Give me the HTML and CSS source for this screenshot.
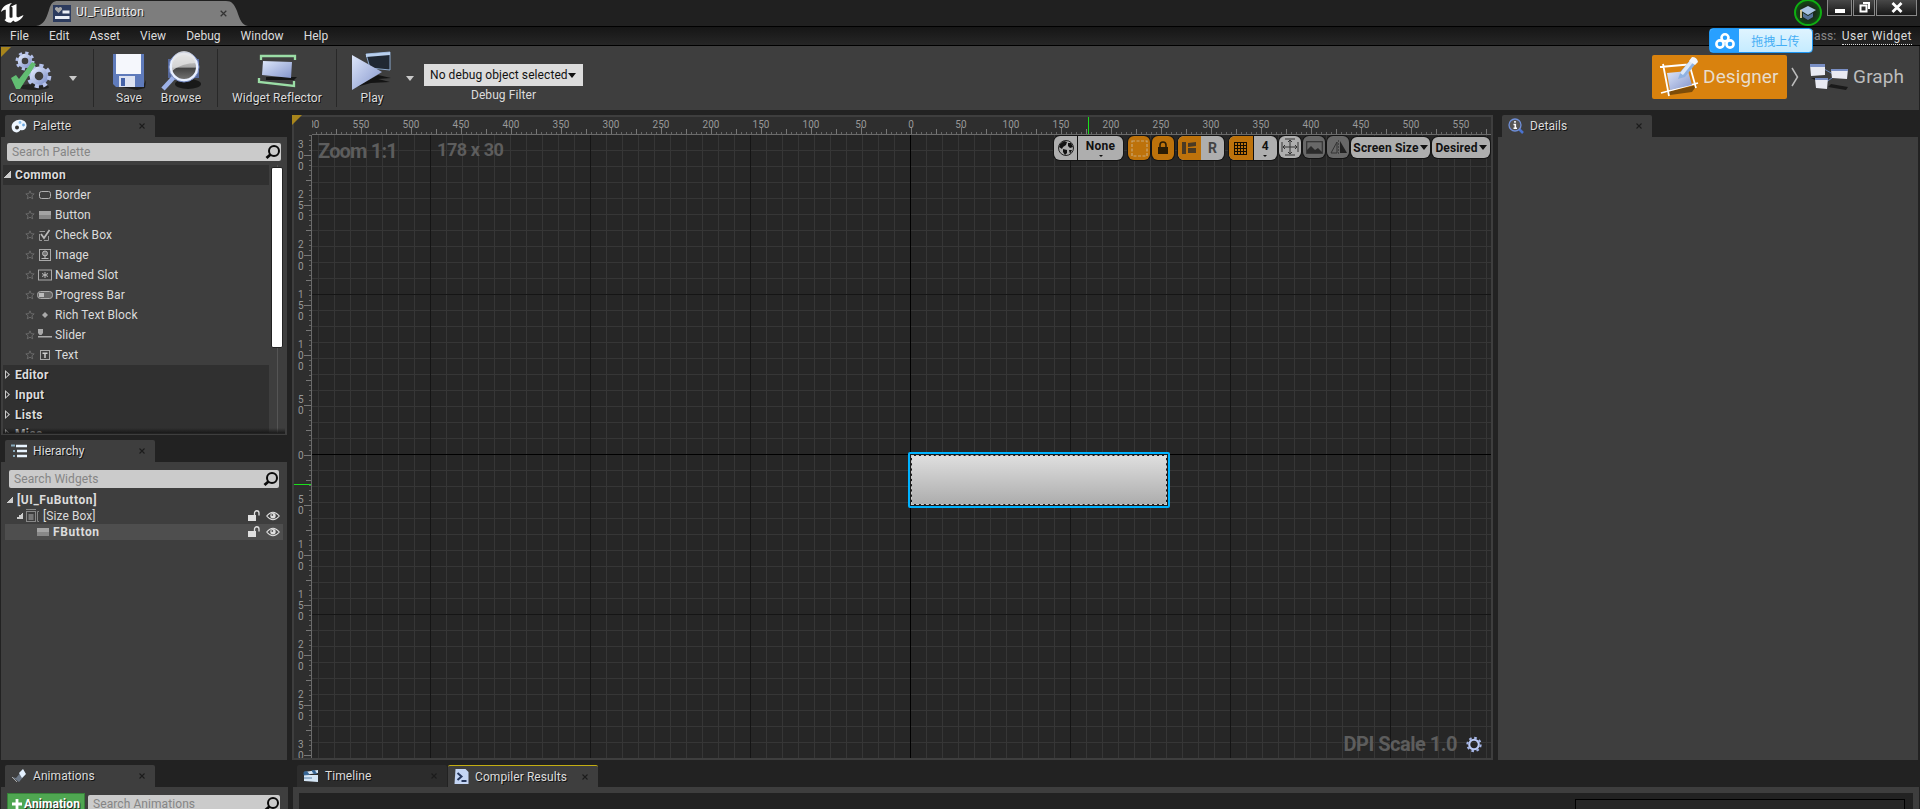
FILE: index.html
```
<!DOCTYPE html>
<html lang="en">
<head>
    <meta charset="UTF-8">
    <meta name="viewport" content="width=device-width, initial-scale=1.0">
    <title>UI_FuButton</title>
    <link rel="stylesheet" href="styles.css">
</head>
<body>
    <!-- Shared icons -->
    <svg class="defs" width="0" height="0">
        <defs>
            <linearGradient id="steel" x1="0" y1="0" x2="1" y2="1">
                <stop offset="0" stop-color="#dde6fa"/>
                <stop offset="1" stop-color="#8495cc"/>
            </linearGradient>
            <linearGradient id="dark" x1="0" y1="0" x2="0" y2="1">
                <stop offset="0" stop-color="#e8e8e8"/>
                <stop offset=".5" stop-color="#a5a5a5"/>
                <stop offset=".55" stop-color="#444"/>
                <stop offset="1" stop-color="#777"/>
            </linearGradient>
        </defs>
        <symbol id="close" viewBox="0 0 8 8"><path d="M1.5 1.5l5 5M6.500 1.500l-5 5" stroke="currentColor" stroke-width="1.100"/></symbol>
        <symbol id="search" viewBox="0 0 16 16"><circle cx="9" cy="7" r="5" fill="none" stroke="#0a0a0a" stroke-width="2"/><path d="M5.500 10.500L1.500 14" stroke="#0a0a0a" stroke-width="2.800"/></symbol>
        <symbol id="star" viewBox="0 0 10 10"><path d="M5 .8l1.200 2.900 3 .2-2.300 1.900.8 3L5 7.200 2.300 8.800l.8-3L.8 3.900l3-.2z" fill="none" stroke="#6e6e6e" stroke-width=".9"/></symbol>
        <symbol id="button" viewBox="0 0 12 8"><path d="M0 0h12v8H0z" fill="#888"/><path d="M0 0h12v4H0z" fill="#a4a4a4"/></symbol>
        <symbol id="unlock" viewBox="0 0 12 11"><path d="M0 5h8v6H0z" fill="#e0e0e0"/><path d="M6.500 5V3a2.200 2.200 0 0 1 4.500 0v2.500" fill="none" stroke="#e0e0e0" stroke-width="1.300"/></symbol>
        <symbol id="eye" viewBox="0 0 14 10"><path d="M.7 5Q7-2.500 13.300 5 7 12.500.7 5z" fill="none" stroke="#e0e0e0" stroke-width="1.100"/><circle cx="7" cy="4.800" r="2.700" fill="#e0e0e0"/><circle cx="6.300" cy="4" r=".9" fill="#555"/></symbol>
        <symbol id="gear" viewBox="-10 -10 20 20"><circle r="5.300" fill="none" stroke="url(#steel)" stroke-width="4"/><circle r="8" fill="none" stroke="#b4c1ea" stroke-width="3" stroke-dasharray="3.140 3.140"/></symbol>
    </svg>

    <header class="titlebar">
        <svg class="logo" width="23" height="20" viewBox="0 0 23 20"><path d="M0 9C1 4 5 1 11 0 9 1.500 8.500 3 8.500 5v8.500c0 1.500 1.500 1.700 3 .7V4.500L10 3.500 15.500 1v12.500l1.500 1L22.500 12C21 16 17.500 18.500 14 19l-1.700-1.500-2.500 2.200C6.500 19.700 4 18 3.500 17l1.300-1V6.800C3 6.300 1.500 7.500 0 9z" fill="#fff"/></svg>
        <div class="doc-tab">
            <svg class="doc-shape" width="212" height="25" viewBox="0 0 212 25"><path d="M0 25C8 24 10 18 13 9 15 2 17 0 22 0H190c6 0 8 3 11 10 3 9 5 14 11 15z" fill="#7d7d7d"/></svg>
            <svg class="doc-icon" width="18" height="17" viewBox="0 0 18 17"><path d="M0 0h18v17H0z" fill="#2c3b5e"/><path d="M5.500 8L2 4.500C1.500 2 4 1 5.500 3 7 1 9.500 2 9 4.500z" fill="#aaa"/><path d="M9.500 5.500h7v3h-7zM2 11h14.500v3H2z" fill="#e9edf5"/></svg>
            <span class="doc-name">UI_FuButton</span>
            <svg class="doc-close" width="9" height="9"><use href="#close"/></svg>
        </div>
        <div class="window-buttons">
            <span class="win win-min"><svg width="10" height="10"><path d="M0 6h10v4H0z" fill="#fff"/></svg></span>
            <span class="win win-max"><svg width="11" height="11" viewBox="0 0 11 11"><path d="M4 1h6v6M1.500 3.500h6v6h-6z" fill="none" stroke="#fff" stroke-width="2"/></svg></span>
            <span class="win win-close"><svg width="12" height="11" viewBox="0 0 12 11"><path d="M1.500 1l9 9M10.500 1l-9 9" stroke="#fff" stroke-width="2.800"/></svg></span>
        </div>
    </header>

    <nav class="menubar">
        <ul>
            <li>File</li>
            <li>Edit</li>
            <li>Asset</li>
            <li>View</li>
            <li>Debug</li>
            <li>Window</li>
            <li>Help</li>
        </ul>
        <div class="parent-class"><span>Parent class:</span> <a>User Widget</a></div>
    </nav>

    <section class="toolbar">
        <i class="corner"></i>
        <div class="tool tool-compile">
            <svg width="42" height="40" viewBox="0 0 42 40">
                <ellipse cx="24" cy="36" rx="15" ry="3" fill="#222"/>
                <use href="#gear" x="5" y="0" width="20" height="20"/>
                <use href="#gear" x="16" y="12" width="26" height="26"/>
                <path d="M1 27l5-3 3 4L22 11l4 2L10 38H6z" fill="#62bd72"/>
            </svg>
            <span>Compile</span>
        </div>
        <i class="arrow"></i>
        <i class="sep"></i>
        <div class="tool tool-save">
            <svg width="36" height="40" viewBox="0 0 36 40">
                <path d="M5 35h27l3-6-1 8-8 2z" fill="#1d1d1d"/>
                <path d="M2 3h31v33H5l-3-3z" fill="#5f7bbb"/>
                <path d="M5 3h25v20H5z" fill="#f5f7fc"/>
                <path d="M8 25h16v11H8z" fill="#dde3f2"/>
                <path d="M10 27h4v8h-4z" fill="#4663a8"/>
            </svg>
            <span>Save</span>
        </div>
        <div class="tool tool-browse">
            <svg width="42" height="40" viewBox="0 0 42 40">
                <ellipse cx="28" cy="33" rx="13" ry="5" fill="#191919"/>
                <path d="M8 8h31v19H8z" fill="#56689a"/>
                <path d="M14 26L3 38" stroke="#9db1e6" stroke-width="4.500"/>
                <circle cx="24" cy="16" r="13.500" fill="url(#dark)" stroke="#e9f0ff" stroke-width="3"/>
                <circle cx="24" cy="16" r="15" fill="none" stroke="#7187c0" stroke-width="1"/>
                <path d="M12 20Q22 12 36 12A12 12 0 0 0 12 12z" fill="#e4e4e4" opacity=".75"/>
            </svg>
            <span>Browse</span>
        </div>
        <i class="sep"></i>
        <div class="tool tool-reflector">
            <svg width="40" height="40" viewBox="0 0 40 40">
                <path d="M9 26h31l-3 3H9z" fill="#151515"/>
                <path d="M6 10l29 1-1 16-29-3z" fill="url(#steel)"/>
                <path d="M4 9V5h34v4M2 27v4l35 4v-5" fill="none" stroke="#9bdda6" stroke-width="2.300"/>
            </svg>
            <span>Widget Reflector</span>
        </div>
        <i class="sep"></i>
        <div class="tool tool-play">
            <svg width="42" height="40" viewBox="0 0 42 40">
                <path d="M5 36l22-12 13 3-13 1 12 3-19 1z" fill="#141414"/>
                <path d="M15 3l24-2v18l-20-2z" fill="#202833" stroke="#8aa7cc"/>
                <path d="M15 3l24-2v3L15 6z" fill="#b9d0ee"/>
                <path d="M1 4l30 17L1 39z" fill="url(#steel)"/>
            </svg>
            <span>Play</span>
        </div>
        <i class="arrow"></i>
        <div class="debug-filter">
            <div class="combo">No debug object selected<i class="caret"></i></div>
            <span>Debug Filter</span>
        </div>
        <div class="modes">
            <div class="mode mode-active">
                <svg width="42" height="40" viewBox="0 0 42 40">
                    <path d="M8 35l31-7-5 7-22 3z" fill="#7d4c08"/>
                    <path d="M2 10l34-3M5 7l6 32M3 36l37-10M31 6l7 25" stroke="#fff" stroke-width="1.800"/>
                    <path d="M9 16l21-2 4 14-22 5z" fill="url(#steel)"/>
                    <path d="M20 22l3-8L34 1l5 4-12 15z" fill="#8fb2e2"/>
                    <path d="M22 16L34 1l3 2-12 15z" fill="#dbe7f8"/>
                    <path d="M31 4l3-4q5 0 6 5l-3 3z" fill="#f2f5fb"/>
                </svg>
                <span>Designer</span>
            </div>
            <svg class="chevron" width="9" height="20" viewBox="0 0 9 20"><path d="M1 1l5.500 9L1 19" fill="none" stroke="#bbb" stroke-width="1.500"/></svg>
            <div class="mode">
                <svg width="40" height="28" viewBox="0 0 40 28">
                    <path d="M22 21l17 3-2 3-18-3zM2 15h8v4z" fill="#1a1a1a"/>
                    <path d="M15 6l9 5M17 19l6-4" stroke="#6682b5"/>
                    <path d="M1 2l15-1v11l-14 1zM22 7l17-1-1 10-15-1zM6 16l13-1-1 11-11-1z" fill="#e9eaf2"/>
                    <path d="M1 1h15v3H1zM22 6h17v2H22zM6 15h13v2H6z" fill="#7a8fc4"/>
                </svg>
                <span>Graph</span>
            </div>
        </div>
    </section>

    <main class="workspace">
        <div class="side">
            <section class="dock palette">
                <div class="tabs"><div class="tab">
                    <svg width="16" height="14" viewBox="0 0 16 14"><path d="M2 12C-1 8 1 2 7 1c5-1 9 2 8.500 6-.5 4-4 5-6 4-2 3-5 3-7.500 1z" fill="#eef6ff"/><circle cx="6" cy="8.500" r="2" fill="#333"/><circle cx="9" cy="3.500" r="1.400" fill="#8dc2ef"/><circle cx="12.500" cy="6" r="1.400" fill="#6ca7e0"/></svg>
                    <span>Palette</span><svg class="x" width="8" height="8"><use href="#close"/></svg>
                </div></div>
                <div class="panel">
                    <div class="search">Search Palette<svg width="16" height="16"><use href="#search"/></svg></div>
                    <div class="palette-body">
                        <ul class="tree">
                            <li class="group"><i class="open"></i>Common</li>
                            <li><svg class="star"><use href="#star"/></svg><svg class="wi" viewBox="0 0 16 12"><rect x="2.500" y="2.500" width="11" height="7" rx="2" fill="none" stroke="#b0b0b0"/></svg>Border</li>
                            <li><svg class="star"><use href="#star"/></svg><svg class="wi" viewBox="0 0 16 12"><use href="#button" x="2" y="2" width="12" height="8"/></svg>Button</li>
                            <li><svg class="star"><use href="#star"/></svg><svg class="wi" viewBox="0 0 16 12"><path d="M8 2.500H2.500M2.500 5v6.500H5M7 11.500h4.500V7" fill="none" stroke="#999"/><path d="M4 5l3 4 5.500-8" fill="none" stroke="#bbb" stroke-width="1.700"/></svg>Check Box</li>
                            <li><svg class="star"><use href="#star"/></svg><svg class="wi" viewBox="0 0 16 12"><rect x="2.500" y=".5" width="11" height="11" fill="none" stroke="#aaa"/><circle cx="8" cy="4.500" r="2.500" fill="#777" stroke="#bbb"/><path d="M8 6v4M4.500 9.500h7" stroke="#bbb"/></svg>Image</li>
                            <li><svg class="star"><use href="#star"/></svg><svg class="wi" viewBox="0 0 16 12"><rect x="1.500" y="1" width="13" height="10" fill="none" stroke="#aaa"/><path d="M8 3v6M5 4.500l6 3M11 4.500l-6 3" stroke="#bbb"/></svg>Named Slot</li>
                            <li><svg class="star"><use href="#star"/></svg><svg class="wi" viewBox="0 0 16 12"><rect x=".5" y="2.500" width="15" height="7" rx="3" fill="#666" stroke="#aaa"/><path d="M2 4h5v4H2z" fill="#bbb"/></svg>Progress Bar</li>
                            <li><svg class="star"><use href="#star"/></svg><svg class="wi" viewBox="0 0 16 12"><path d="M8 3l3 3-3 3-3-3z" fill="#aaa"/></svg>Rich Text Block</li>
                            <li><svg class="star"><use href="#star"/></svg><svg class="wi" viewBox="0 0 16 12"><path d="M1 0h5v4L4.500 6h-2L1 4zM1 7h14v1.500H1z" fill="#aaa"/></svg>Slider</li>
                            <li><svg class="star"><use href="#star"/></svg><svg class="wi" viewBox="0 0 16 12"><rect x="3.500" y="1.500" width="9" height="9" fill="none" stroke="#aaa"/><path d="M5.500 4.200h5M8 4v5" stroke="#ccc" stroke-width="1.500"/></svg>Text</li>
                            <li class="group"><i class="shut"></i>Editor</li>
                            <li class="group"><i class="shut"></i>Input</li>
                            <li class="group"><i class="shut"></i>Lists</li>
                            <li class="group last"><i class="shut"></i>Misc</li>
                        </ul>
                        <div class="scroll"><i></i></div>
                    </div>
                </div>
            </section>
            <section class="dock hierarchy">
                <div class="tabs"><div class="tab">
                    <svg width="16" height="14" viewBox="0 0 16 14"><path d="M0 1.500h4M2 7h2M2 12h2" stroke="#8ab" stroke-width="2"/><path d="M5 2h11M6 7h10M6 12h10" stroke="#e8f4ff" stroke-width="2.500"/></svg>
                    <span>Hierarchy</span><svg class="x" width="8" height="8"><use href="#close"/></svg>
                </div></div>
                <div class="panel">
                    <div class="search">Search Widgets<svg width="16" height="16"><use href="#search"/></svg></div>
                    <ul class="outline">
                        <li class="root"><i class="open"></i>[UI_FuButton]</li>
                        <li class="child"><i class="open"></i><svg width="14" height="14" viewBox="0 0 14 14"><rect x=".5" y="2.500" width="9" height="10" fill="none" stroke="#888"/><rect x="2.500" y="5" width="5" height="6" fill="#777"/><path d="M0 .5h10M13 2.500h-1.500v10H13" fill="none" stroke="#888"/></svg><span>[Size Box]</span><svg class="lock" width="12" height="11"><use href="#unlock"/></svg><svg width="14" height="10"><use href="#eye"/></svg></li>
                        <li class="leaf"><svg width="12" height="8"><use href="#button"/></svg><span>FButton</span><svg class="lock" width="12" height="11"><use href="#unlock"/></svg><svg width="14" height="10"><use href="#eye"/></svg></li>
                    </ul>
                </div>
            </section>
        </div>

        <section class="canvas">
            <i class="corner"></i>
            <div class="ruler-top">
                <div class="marks"><span>600</span><span>550</span><span>500</span><span>450</span><span>400</span><span>350</span><span>300</span><span>250</span><span>200</span><span>150</span><span>100</span><span>50</span><span>0</span><span>50</span><span>100</span><span>150</span><span>200</span><span>250</span><span>300</span><span>350</span><span>400</span><span>450</span><span>500</span><span>550</span></div>
                <i class="cursor-x"></i>
            </div>
            <div class="canvas-row">
                <div class="ruler-left">
                    <div class="marks"><span>300</span><span>250</span><span>200</span><span>150</span><span>100</span><span>50</span><span>0</span><span>50</span><span>100</span><span>150</span><span>200</span><span>250</span><span>300</span></div>
                    <i class="cursor-y"></i>
                </div>
                <div class="viewport">
                    <div class="hud">
                        <span class="zoom">Zoom 1:1</span>
                        <span class="size">178 x 30</span>
                        <div class="hud-buttons">
                            <div class="pill loc">
                                <span><svg width="16" height="16" viewBox="0 0 16 16"><circle cx="8" cy="8" r="7.500" fill="#aaa" stroke="#222"/><path d="M2 4l4-3 3 1-1 3-3 2-1 2-3-2zM10 3l3 0 2 4-3 1-2-2zM5 9l4 1v3l-2 2-2-3zM11 10l3 0-2 4z" fill="#111"/></svg></span>
                                <span class="drop">None<i></i></span>
                            </div>
                            <div class="pill on dash"><svg width="17" height="17" viewBox="0 0 17 17"><rect x="1" y="1" width="15" height="15" fill="none" stroke="#c9a877" stroke-width="1.200" stroke-dasharray="3 1.500"/></svg></div>
                            <div class="pill on"><svg width="12" height="14" viewBox="0 0 12 14"><path d="M1 6h10v7H1z" fill="#2a1c05"/><path d="M3 7V4a3 3 0 0 1 6 0v3" fill="none" stroke="#2a1c05" stroke-width="1.600"/></svg></div>
                            <div class="pill flow">
                                <span class="on"><svg width="15" height="14" viewBox="0 0 15 14"><path d="M0 1h4v12H0zM6 2l8-1v4l-8 1zM6 7h8v5H6z" fill="#4a3a24"/></svg></span>
                                <span class="r">R</span>
                            </div>
                            <div class="pill snap">
                                <span class="on"><svg width="13" height="13" viewBox="0 0 13 13" shape-rendering="crispEdges"><path d="M.5 0v13M3.500 0v13M6.500 0v13M9.500 0v13M12.500 0v13M0 .5h13M0 3.500h13M0 6.500h13M0 9.500h13M0 12.500h13" stroke="#140c00"/></svg></span>
                                <span class="drop">4<i></i></span>
                            </div>
                            <div class="pill sq"><svg width="18" height="18" viewBox="0 0 18 18"><path d="M1 4v10M17 4v10M4 1h10M4 17h10M9 2v14M2 9h14M7 4l2-2 2 2M7 14l2 2 2-2M4 7L2 9l2 2M14 7l2 2-2 2" fill="none" stroke="#333"/></svg></div>
                            <div class="pill sq off"><svg width="17" height="13" viewBox="0 0 17 13"><rect x=".7" y=".7" width="15.600" height="11.600" fill="none" stroke="#333" stroke-width="1.200"/><path d="M1 12V9l4-4 4 4 3-2 4 4v1z" fill="#2b2b2b"/></svg></div>
                            <div class="pill sq off"><svg width="17" height="14" viewBox="0 0 17 14"><path d="M7 2v11H1z" fill="none" stroke="#333"/><path d="M10 1v12h7z" fill="#222"/><path d="M8.500 0v14" stroke="#444" stroke-dasharray="2 1"/></svg></div>
                            <div class="pill text screen">Screen Size<i class="caret"></i></div>
                            <div class="pill text desired">Desired<i class="caret"></i></div>
                        </div>
                    </div>
                    <div class="selected"><div class="fbutton"></div></div>
                    <div class="dpi"><span>DPI Scale 1.0</span><svg width="16" height="17" viewBox="-10 -10 20 20"><circle r="6" fill="none" stroke="#b9c8f3" stroke-width="2.600"/><circle r="8.300" fill="none" stroke="#a5b5e6" stroke-width="2.600" stroke-dasharray="3.260 3.260"/></svg></div>
                </div>
            </div>
        </section>

        <section class="dock details">
            <div class="tabs"><div class="tab">
                <svg width="16" height="16" viewBox="0 0 16 16"><path d="M11 11l4 4" stroke="#4a72cf" stroke-width="2.500"/><circle cx="7" cy="7" r="6" fill="#555" stroke="#6f8fd8" stroke-width="1.300"/><path d="M7 3v1.800M5.500 6.500H7.300V10M5.500 10.300h3.500" fill="none" stroke="#fff" stroke-width="1.600"/></svg>
                <span>Details</span><svg class="x" width="8" height="8"><use href="#close"/></svg>
            </div></div>
            <div class="panel"></div>
        </section>
    </main>

    <footer class="bottom">
        <section class="dock animations">
            <div class="tabs"><div class="tab">
                <svg width="16" height="14" viewBox="0 0 16 14"><path d="M1 8l4 1 5-6 4 3-6 7z" fill="#6d7886"/><path d="M8 4l4-4 3 5-4 4z" fill="#e4f1ff"/><path d="M1 8l5 5" stroke="#aaa"/></svg>
                <span>Animations</span><svg class="x" width="8" height="8"><use href="#close"/></svg>
            </div></div>
            <div class="panel">
                <div class="add"><svg width="10" height="10" viewBox="0 0 10 10"><path d="M5 0v10M0 5h10" stroke="#fff" stroke-width="2.800"/></svg>Animation</div>
                <div class="search">Search Animations<svg width="16" height="16"><use href="#search"/></svg></div>
            </div>
        </section>
        <section class="dock results">
            <div class="tabs">
                <div class="tab idle">
                    <svg width="16" height="14" viewBox="0 0 16 14"><path d="M1 3l14-2v3L1 6zM1 6h14v7l-14-1z" fill="#d5e6f6"/><path d="M1 3l3-.5 2 3-5 .5zM9 1.800l2.500-.3 2 3-2.500.3zM1 9h8" fill="#356595" stroke="#356595" stroke-width=".8"/></svg>
                    <span>Timeline</span><svg class="x" width="8" height="8"><use href="#close"/></svg>
                </div>
                <div class="tab current">
                    <svg width="15" height="15" viewBox="0 0 14 15"><path d="M1 0h10l3 3v12H0z" fill="#c5d6f5"/><path d="M3 4l4 3.500L3 11M7 12h5" fill="none" stroke="#26375c" stroke-width="2"/></svg>
                    <span>Compiler Results</span><svg class="x" width="8" height="8"><use href="#close"/></svg>
                </div>
            </div>
            <div class="panel"><div class="log"><div class="log-box"></div></div></div>
        </section>
    </footer>

    <div class="tutorial"><svg width="18" height="16" viewBox="0 0 18 16"><path d="M1 5l8-4 8 4-8 5z" fill="#a9c3e2"/><path d="M4 8l5 3 5-3v4l-5 3-5-3z" fill="#557299"/><path d="M2 5v8" stroke="#e0cf9c" stroke-width="1.800"/></svg></div>
    <div class="upload">
        <span class="upload-logo"><svg width="20" height="16" viewBox="0 0 20 16"><g fill="none" stroke="#fff" stroke-width="2.600"><circle cx="10" cy="4.800" r="3.500"/><circle cx="5" cy="11" r="3.600"/><circle cx="15" cy="11" r="3.600"/></g></svg></span>
        <span class="upload-text">拖拽上传</span>
    </div>
</body>
</html>
```

FILE: styles.css
```
* {
    box-sizing: border-box;
}

body {
    margin: 0;
    width: 1920px;
    height: 809px;
    overflow: hidden;
    position: relative;
    display: flex;
    flex-direction: column;
    background-color: #222;
    color: #dcdcdc;
    font-family: Roboto, "Liberation Sans", sans-serif;
    font-size: 12px;
    line-height: 16px;
    letter-spacing: 0.08px;
}

ul {
    list-style: none;
    margin: 0;
    padding: 0;
}

svg {
    display: block;
    flex-shrink: 0;
}

.defs {
    position: absolute;
}

/* Title bar */
.titlebar {
    height: 26px;
    flex-shrink: 0;
    display: flex;
    align-items: flex-start;
    background-color: #202020;
}

.logo {
    margin: 3px 12px 0 1px;
}

.doc-tab {
    width: 212px;
    height: 25px;
    margin-top: 1px;
    display: grid;
    grid-template-columns: 17px 18px 5px 1fr 9px 20px;
    align-items: center;
}

.doc-shape {
    grid-area: 1 / 1 / 2 / 7;
}

.doc-icon {
    grid-area: 1 / 2;
}

.doc-name {
    grid-area: 1 / 4;
    color: #eee;
    letter-spacing: 0.3px;
    text-shadow: 1px 1px #222;
    margin-top: -3px;
}

.doc-close {
    grid-area: 1 / 5;
    color: #333;
    margin-top: -1px;
}

.window-buttons {
    display: flex;
    gap: 1px;
    margin-left: auto;
    margin-right: 3px;
}

.win {
    height: 16px;
    display: flex;
    align-items: center;
    justify-content: center;
    border: 1px solid #888;
    border-top: none;
    background: linear-gradient(#484848, #181818);
}

.win-min {
    width: 25px;
}

.win-max {
    width: 22px;
}

.win-close {
    width: 41px;
}

/* Menu */
.menubar {
    height: 20px;
    flex-shrink: 0;
    display: flex;
    justify-content: space-between;
    padding: 0 8px 0 10px;
    border-top: 1px solid #000;
    border-bottom: 1px solid #000;
    background: linear-gradient(#161616, #262626);
}

.menubar ul {
    display: flex;
    gap: 20px;
    padding-top: 1px;
    letter-spacing: 0.03px;
}

.parent-class {
    padding-top: 1px;
    letter-spacing: 0.5px;
}

.parent-class span {
    color: #888;
    margin-right: 2px;
    letter-spacing: 0.1px;
}

.parent-class a {
    display: inline-block;
    line-height: 15px;
    border-bottom: 1px dotted #ddd;
}

/* Toolbar */
.toolbar {
    height: 64px;
    flex-shrink: 0;
    display: flex;
    position: relative;
    margin: 0 1px;
    background-color: #3e3e3e;
}

.corner {
    position: absolute;
    left: 0;
    top: 1px;
    border-top: 10px solid #a8851c;
    border-right: 10px solid transparent;
}

.tool {
    display: flex;
    flex-direction: column;
    align-items: center;
    padding-top: 5px;
    text-shadow: 1px 1px #111;
}

.tool span {
    margin-top: -1px;
    white-space: nowrap;
}

.tool-compile {
    margin-left: 7px;
    width: 46px;
}

.tool-save {
    margin-left: 19px;
    width: 32px;
}

.tool-browse {
    margin-left: 11px;
    width: 50px;
}

.tool-reflector {
    margin-left: 13px;
    width: 92px;
}

.tool-play {
    margin-left: 14px;
    width: 42px;
}

.arrow {
    align-self: flex-start;
    margin: 30px 0 0 15px;
    border: 4.5px solid transparent;
    border-top: 5px solid #c9c9c9;
    border-bottom: none;
}

.sep {
    width: 1px;
    margin: 3px 0 3px 16px;
    background-color: #282828;
}

.arrow + .sep {
    margin-left: 16px;
}

.tool-browse + .sep {
    margin-left: 11px;
}

.tool-reflector + .sep {
    margin-left: 13px;
}

.tool-play + .arrow {
    margin-left: 13px;
}

.debug-filter {
    display: flex;
    flex-direction: column;
    align-items: center;
    margin: 18px 0 0 10px;
}

.debug-filter > span {
    margin-top: 1px;
}

.combo {
    width: 159px;
    height: 22px;
    display: flex;
    align-items: center;
    justify-content: space-between;
    padding: 0 7px 0 6px;
    background-color: #dcdcdc;
    color: #111;
}

.caret {
    border: 4px solid transparent;
    border-top: 5px solid #111;
    border-bottom: none;
}

.modes {
    display: flex;
    align-items: center;
    height: 44px;
    margin: 9px 15px 0 auto;
    font-size: 19px;
    color: #bcbcbc;
}

.mode {
    display: flex;
    align-items: center;
    gap: 4px;
    height: 44px;
}

.mode-active {
    width: 135px;
    padding-left: 6px;
    gap: 3px;
    border-radius: 2px;
    background-color: #d9820e;
    color: #e8dccb;
}

.chevron {
    margin: 0 9px 0 4px;
}

/* Docks */
.workspace {
    height: 650px;
    flex-shrink: 0;
    padding: 5px 1px 0;
    display: flex;
}

.side {
    width: 286px;
    display: flex;
    flex-direction: column;
    gap: 5px;
}

.dock {
    display: flex;
    flex-direction: column;
    min-height: 0;
}

.palette {
    height: 320px;
}

.hierarchy {
    flex: 1;
}

.tabs {
    display: flex;
    gap: 2px;
    padding-left: 4px;
}

.tab {
    width: 150px;
    height: 22px;
    flex-shrink: 0;
    display: flex;
    align-items: center;
    gap: 6px;
    padding: 0 9px 0 6px;
    background-color: #3e3e3e;
    border-radius: 2px 2px 0 0;
    text-shadow: 1px 1px #111;
}

.tab .x {
    margin-left: auto;
    color: #1c1c1c;
}

.panel {
    flex: 1;
    min-height: 0;
    background-color: #3e3e3e;
}

.search {
    height: 18px;
    display: flex;
    align-items: center;
    justify-content: space-between;
    padding: 0 0 0 5px;
    border-radius: 2px;
    background-color: #cbcbcb;
    color: #858585;
}

.palette .search {
    margin: 6px 6px 4px;
}

.palette-body {
    height: 269px;
    display: flex;
    margin: 0 2px;
    overflow: hidden;
    position: relative;
    border-bottom: 1px solid #222;
}

.palette-body::after {
    content: "";
    position: absolute;
    left: 0;
    right: 0;
    bottom: 0;
    height: 5px;
    background: linear-gradient(transparent, rgba(20, 20, 20, 0.8));
}

.tree {
    width: 266px;
}

.tree li {
    height: 20px;
    display: flex;
    align-items: center;
    padding-left: 22px;
}

.tree .group {
    padding-left: 1px;
    background-color: #303030;
    font-weight: bold;
    letter-spacing: 0.35px;
    text-shadow: 1px 1px #111;
}

.tree .last {
    padding-bottom: 2px;
}

.star {
    width: 10px;
    height: 10px;
    margin-right: 2px;
}

.wi {
    width: 16px;
    height: 12px;
    margin-right: 2px;
}

.open {
    width: 7px;
    height: 7px;
    margin: 0 4px 2px 0;
    background: linear-gradient(135deg, transparent 50%, #ccc 50%);
}

.shut {
    width: 5px;
    height: 9px;
    margin: 0 5px 1px 1px;
    background-color: #ccc;
    clip-path: polygon(0 0, 100% 50%, 0 100%, 0 0, 1px 2px, 1px 7px, 70% 50%, 1px 2px);
}

.scroll {
    width: 12px;
    margin-left: 2px;
    background: linear-gradient(#555, #555) 6px 0 / 1px 100% no-repeat;
}

.scroll i {
    display: block;
    height: 181px;
    margin-top: 2px;
    background-color: #fff;
    border: 1px solid #222;
    border-radius: 2px;
}

.hierarchy .search {
    margin: 8px 8px 4px;
}

.outline {
    margin: 0 4px;
}

.outline li {
    height: 16px;
    display: flex;
    align-items: center;
}

.outline .root {
    font-weight: bold;
    letter-spacing: 0.6px;
    padding-left: 1px;
}

.outline .child {
    padding-left: 11px;
    padding-right: 3px;
}

.outline .child .open {
    margin-right: 3px;
}

.outline .child span {
    margin-left: 3px;
}

.outline .leaf {
    padding-left: 32px;
    padding-right: 3px;
    background-color: #4e4e4e;
    font-weight: bold;
    letter-spacing: 0.6px;
}

.outline .leaf span {
    margin-left: 4px;
}

.outline svg {
    margin-bottom: 1px;
}

.outline .lock {
    margin: 0 6px 1px auto;
}

/* Designer canvas */
.canvas {
    width: 1201px;
    margin-left: 5px;
    display: flex;
    flex-direction: column;
    position: relative;
    border: 2px solid #3e3e3e;
    background-color: #2e2e2e;
}

.canvas > .corner {
    left: -2px;
    top: -2px;
    z-index: 1;
}

.ruler-top {
    height: 18px;
    flex-shrink: 0;
    margin-left: 18px;
    position: relative;
    overflow: hidden;
    color: #989898;
    font-size: 10px;
    border-bottom: 1px solid #6a6a6a;
    background:
        repeating-linear-gradient(90deg, #777 0 1px, transparent 1px 50px) -1px 100% / 1250px 7px no-repeat,
        repeating-linear-gradient(90deg, #777 0 1px, transparent 1px 25px) -1px 100% / 1250px 5px no-repeat,
        repeating-linear-gradient(90deg, #666 0 1px, transparent 1px 5px) -1px 100% / 1250px 2px no-repeat;
}

.ruler-top .marks {
    display: flex;
    margin-left: -26px;
}

.ruler-top .marks span {
    width: 50px;
    flex-shrink: 0;
    text-align: center;
}

.cursor-x {
    position: absolute;
    left: 776px;
    top: 0;
    width: 1px;
    height: 18px;
    background-color: #1be01b;
}

.canvas-row {
    flex: 1;
    min-height: 0;
    display: flex;
}

.ruler-left {
    width: 18px;
    flex-shrink: 0;
    position: relative;
    overflow: hidden;
    color: #989898;
    font-size: 10px;
    border-right: 1px solid #6a6a6a;
    background:
        repeating-linear-gradient(#777 0 1px, transparent 1px 50px) 100% -30px / 7px 700px no-repeat,
        repeating-linear-gradient(#777 0 1px, transparent 1px 25px) 100% -30px / 5px 700px no-repeat,
        repeating-linear-gradient(#666 0 1px, transparent 1px 5px) 100% -30px / 2px 700px no-repeat;
}

.ruler-left .marks {
    margin-top: -5px;
}

.ruler-left .marks span {
    height: 50px;
    width: 6px;
    margin-left: 4px;
    display: flex;
    align-items: center;
    line-height: 11px;
    word-break: break-all;
}

.cursor-y {
    position: absolute;
    left: 0;
    top: 349px;
    width: 18px;
    height: 1px;
    background-color: #1be01b;
}

.viewport {
    flex: 1;
    position: relative;
    overflow: hidden;
    background:
        linear-gradient(#000, #000) 598px 0 / 1px 100% no-repeat,
        linear-gradient(#000, #000) 0 319px / 100% 1px no-repeat,
        linear-gradient(90deg, #151515 1px, transparent 1px) 118px 0 / 160px 160px,
        linear-gradient(#151515 1px, transparent 1px) 0 159px / 160px 160px,
        linear-gradient(90deg, #363636 1px, transparent 1px) 6px 0 / 16px 16px,
        linear-gradient(#363636 1px, transparent 1px) 0 15px / 16px 16px,
        #262626;
}

.hud {
    display: flex;
    color: #5d5d5d;
    font-weight: bold;
}

.zoom {
    margin: 4px 0 0 6px;
    width: 119px;
    font-size: 20px;
    line-height: 24px;
    letter-spacing: -0.8px;
}

.size {
    margin-top: 3px;
    font-size: 18px;
    line-height: 24px;
    letter-spacing: -0.4px;
}

.hud-buttons {
    display: flex;
    align-items: flex-start;
    margin: 1px 1px 0 auto;
    color: #111;
    gap: 2px;
}

.pill {
    height: 24px;
    width: 22px;
    display: flex;
    align-items: center;
    justify-content: center;
    overflow: hidden;
    border-radius: 6px;
    background-color: #aeaeae;
    box-shadow: 0 0 0 1px #141414;
}

.pill > span {
    height: 24px;
    flex: 1;
    display: flex;
    align-items: center;
    justify-content: center;
}

.pill.on,
.pill .on {
    background-color: #bd720b;
}

.pill.off {
    background-color: #686868;
}

.loc {
    width: 69px;
    margin-right: 3px;
}

.loc > span:first-child {
    flex: 0 0 23px;
}

.pill .drop {
    border-left: 1px solid #111;
    flex-direction: column;
    line-height: 14px;
    letter-spacing: 0.3px;
}

.drop i {
    margin-top: 2px;
    border: 2px solid transparent;
    border-top-color: #111;
    border-bottom: none;
}

.flow {
    width: 46px;
    margin: 0 3px 0 2px;
}

.r {
    color: #444;
    font-size: 14px;
}

.snap {
    width: 48px;
}

.pill.sq {
    height: 22px;
}

.pill.text {
    height: 21px;
    gap: 0;
    margin-top: 1px;
    white-space: nowrap;
    letter-spacing: 0.15px;
}

.pill .caret {
    margin-left: 1px;
}

.screen {
    width: 79px;
}

.desired {
    width: 58px;
}

.selected {
    position: absolute;
    left: 596px;
    top: 317px;
    width: 262px;
    height: 56px;
    padding: 1px;
    border: 2px solid #00b2ff;
    border-radius: 2px;
    background-color: #1c1c1c;
}

.fbutton {
    height: 50px;
    border: 1px dashed #ccc;
    background: linear-gradient(#dedede, #adadad);
    background-clip: padding-box;
}

.dpi {
    position: absolute;
    right: 9px;
    bottom: 2px;
    display: flex;
    align-items: center;
    gap: 9px;
    color: #5d5d5d;
    font-size: 20px;
    line-height: 24px;
    font-weight: bold;
    letter-spacing: -0.5px;
}

.details {
    width: 420px;
    margin-left: 5px;
}

/* Bottom docks */
.bottom {
    flex: 1;
    min-height: 0;
    display: flex;
    gap: 5px;
    padding: 5px 1px 0;
}

.animations {
    width: 287px;
}

.animations .panel {
    display: flex;
    gap: 3px;
    padding: 6px 8px 0 6px;
    overflow: hidden;
}

.add {
    width: 78px;
    height: 22px;
    display: flex;
    align-items: center;
    justify-content: center;
    gap: 2px;
    background-color: #4fa651;
    border: 1px solid #378239;
    color: #fff;
    font-weight: bold;
    text-shadow: 1px 1px #222;
}

.animations .search {
    flex: 1;
    margin-top: 2px;
}

.results {
    flex: 1;
}

.results .tabs {
    gap: 1px;
}

.tab.idle {
    background-color: #2c2c2c;
}

.tab.current {
    border-top: 1px solid #c4ae12;
}

.results .panel {
    padding: 6px 6px 0;
}

.log {
    height: 16px;
    padding: 6px 8px 0;
    background-color: #222;
    display: flex;
    justify-content: flex-end;
}

.log-box {
    width: 330px;
    border: 1px solid #000;
    border-bottom: none;
    background-color: #272727;
}

/* Floating items */
.tutorial {
    position: absolute;
    left: 1794px;
    top: -1px;
    width: 28px;
    height: 27px;
    display: flex;
    align-items: center;
    justify-content: center;
    border: 2px solid #0fae12;
    border-radius: 50%;
    background: radial-gradient(#1a2a1a 40%, #0b6b0e);
}

.upload {
    position: absolute;
    left: 1709px;
    top: 28px;
    width: 104px;
    height: 25px;
    display: flex;
    overflow: hidden;
    border: 1px solid #1e97f3;
    border-radius: 4px;
    background: linear-gradient(#dff4ff, #c5ebff);
}

.upload-logo {
    width: 29px;
    display: flex;
    align-items: center;
    justify-content: center;
    background-color: #28a0ff;
}

.upload-text {
    flex: 1;
    text-align: center;
    line-height: 24px;
    color: #45aef5;
    font-family: "Noto Sans CJK SC", sans-serif;
}
```
